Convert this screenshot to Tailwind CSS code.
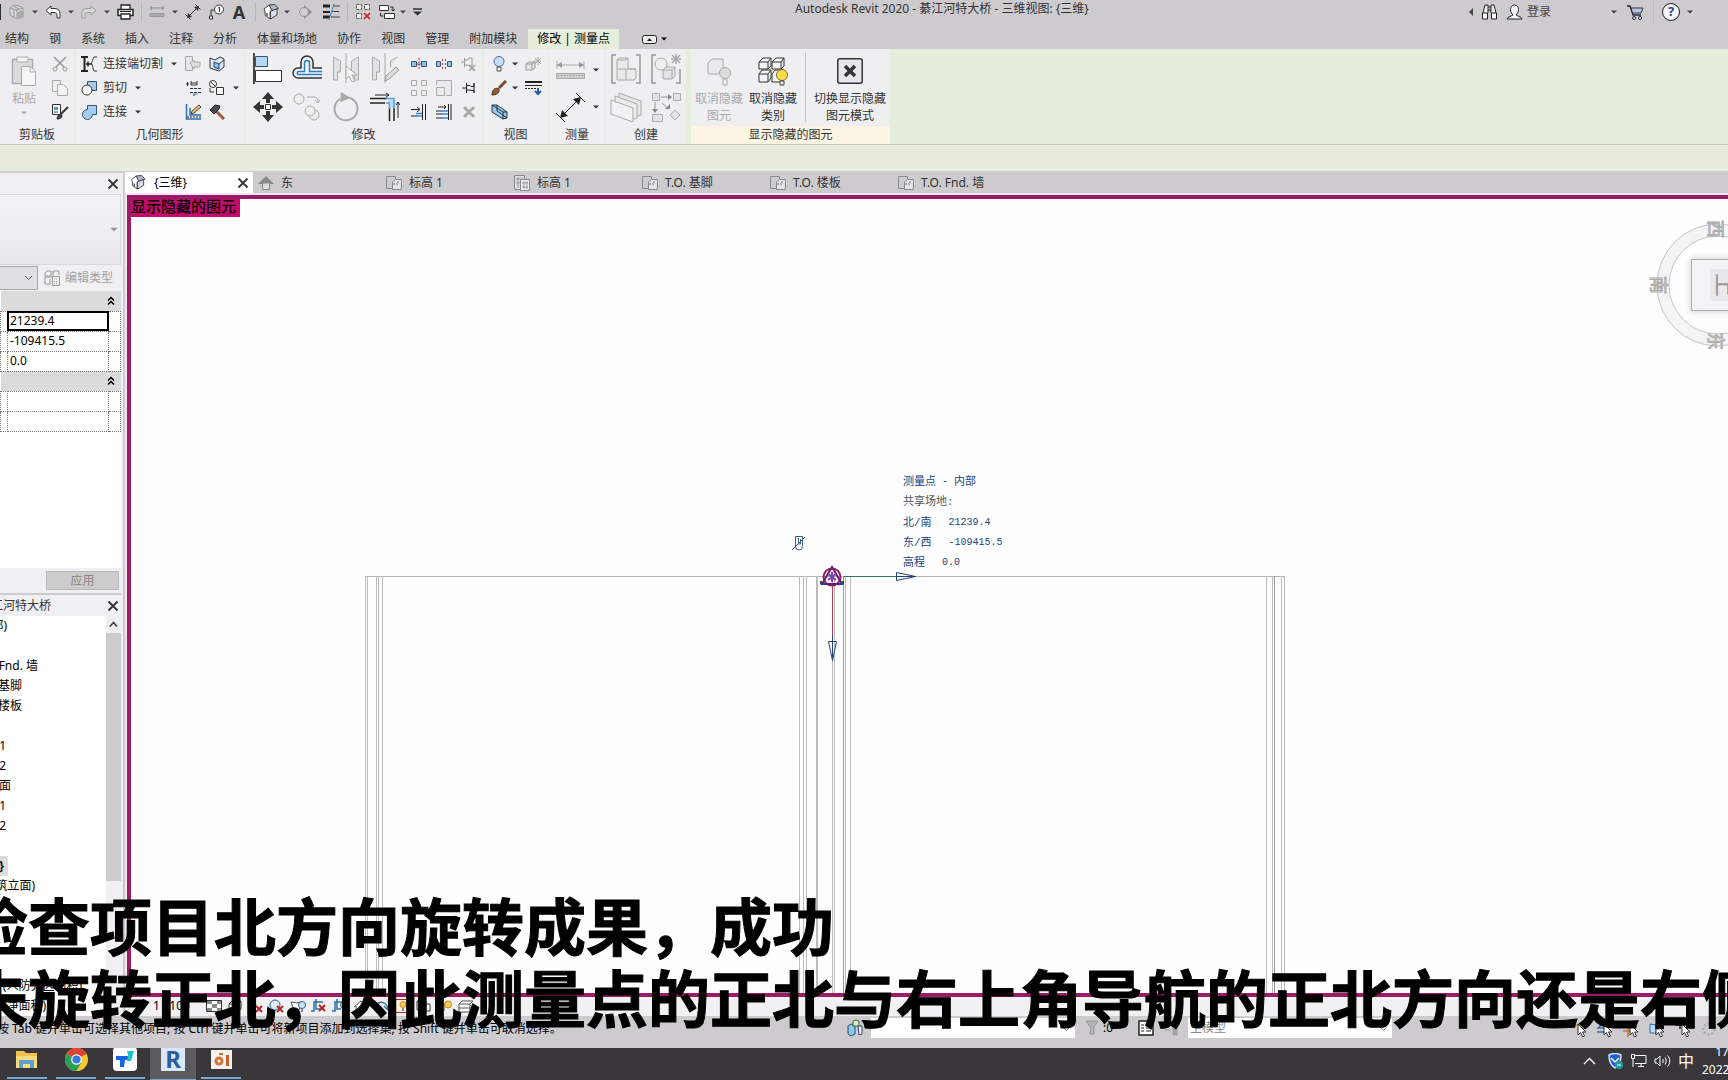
<!DOCTYPE html>
<html lang="zh-CN">
<head>
<meta charset="utf-8">
<title>Autodesk Revit 2020</title>
<script src="https://cdn.jsdelivr.net/npm/@tailwindcss/browser@4"></script>
</head>
<body class="relative flex h-screen flex-col overflow-hidden bg-[#cdcbce] font-['Noto_Sans','Noto_Sans_CJK_SC',sans-serif] text-xs text-[#333] whitespace-nowrap">

<!-- shared icons -->
<svg class="hidden">
  <symbol id="down" viewBox="0 0 6 4"><path d="M0 .5h6L3 3.500z" fill="currentColor"/></symbol>
  <symbol id="close" viewBox="0 0 12 12"><path d="M1.500 1.500l9 9M10.500 1.500l-9 9" stroke="#333" stroke-width="1.800"/></symbol>
  <symbol id="house3d" viewBox="0 0 16 16"><path d="M1 5l5-4 3 4-2 3v7l-5-4V7z" fill="#fff" stroke="#444"/><path d="M6 1l6-.5 3.500 4L9 6.500z" fill="#aab6c9" stroke="#444"/><path d="M7.500 8L9 6.500l5-1.500v6l-6.500 4z" fill="#d6dce6" stroke="#444"/><path d="M4 9v3.500" stroke="#555" stroke-width="1.500"/></symbol>
  <symbol id="plan" viewBox="0 0 16 14"><path d="M.5.500h9v3M.5.500v12h6" fill="none" stroke="#8a8990"/><path d="M6.500 13.500V6l3-2.500h6v10z" fill="#e2e1e6" stroke="#8a8990"/><path d="M7 8h5V4" fill="none" stroke="#77767c" stroke-dasharray="2 1"/></symbol>
  <symbol id="planGrid" viewBox="0 0 16 16"><path d="M.5.500h10v14H.5z" fill="#dddce1" stroke="#8a8990"/><path d="M2 4h7M2 8h4M4 2v11" stroke="#9a99a0"/><path d="M6.500 4.500h9v11h-9z" fill="#eee" stroke="#8a8990"/><path d="M8 8h6M8 12h6M10 6v8M13 6v8" stroke="#9a99a0"/></symbol>
  <symbol id="cursor" viewBox="0 0 16 18"><path d="M7 4v11l2.500-2.500L11.500 17l2-1-2-4H15z" fill="#fff" stroke="#333"/></symbol>
  <symbol id="chev2" viewBox="0 0 8 10"><path d="M1 4.500L4 1.500l3 3M1 8.500l3-3 3 3" fill="none" stroke="#000" stroke-width="1.500"/></symbol>
</svg>

<!-- title bar with quick access -->
<header class="flex h-[26px] shrink-0 items-center">
  <div class="flex w-[795px] shrink-0 items-center pb-0.5 text-[#444]">
    <span class="mr-[4px] h-4 w-px bg-[#333]"></span>
    <button class="flex w-6 justify-center" aria-label="打开"><svg width="16" height="16" viewBox="0 0 16 16"><path d="M1 4l4-3 5 1 4 2v7l-6 4-7-4z" fill="#d8d7da" stroke="#999"/><path d="M1 4l7 2 6-2M8 6v9M4 2l6 3M5 5v8" fill="none" stroke="#999"/><path d="M8 9l4-3 3 3v4l-4 2-3-2z" fill="#aaa"/></svg></button>
    <span class="flex w-3 justify-center"><svg class="h-1 w-1.5"><use href="#down"/></svg></span>
    <button class="flex w-6 justify-center" aria-label="撤销"><svg width="16" height="14" viewBox="0 0 16 14"><path d="M1 5.500L6 1v2.500h4c3 0 5 2 5 5V13h-3V9.500c0-1-1-2-2-2H6V10z" fill="#fff" stroke="#333"/></svg></button>
    <span class="flex w-3 justify-center"><svg class="h-1 w-1.5"><use href="#down"/></svg></span>
    <button class="flex w-6 justify-center" aria-label="重做"><svg width="16" height="14" viewBox="0 0 16 14"><path d="M15 5.500L10 1v2.500H6c-3 0-5 2-5 5V13h3V9.500c0-1 1-2 2-2h4V10z" fill="#d8d7da" stroke="#999"/></svg></button>
    <span class="flex w-3 justify-center"><svg class="h-1 w-1.5"><use href="#down"/></svg></span>
    <button class="flex w-6 justify-center" aria-label="打印"><svg width="17" height="16" viewBox="0 0 17 16"><path d="M4 5V1h9v4" fill="#fff" stroke="#222" stroke-width="1.300"/><path d="M1 5.500h15v6H1z" fill="#fff" stroke="#222" stroke-width="1.500"/><path d="M4 10h9v5H4z" fill="#fff" stroke="#222" stroke-width="1.300"/><path d="M3 7.500h11" stroke="#222"/></svg></button>
    <span class="flex w-2 justify-center"><i class="h-5 w-px bg-[#b9b7ba]"></i></span>
    <button class="flex w-6 justify-center text-[#888]" aria-label="测量"><svg width="16" height="14" viewBox="0 0 16 14"><path d="M1 3h14M3 1L1 3l2 2M13 1l2 2-2 2" fill="none" stroke="#888"/><path d="M1 8.500h14v3H1z" fill="#aaa" stroke="#999"/></svg></button>
    <span class="flex w-3 justify-center"><svg class="h-1 w-1.5"><use href="#down"/></svg></span>
    <button class="flex w-6 justify-center" aria-label="对齐尺寸标注"><svg width="16" height="16" viewBox="0 0 16 16"><path d="M3 13L13 3M.5 10.500l5 5M10.500.5l5 5" stroke="#333"/><path d="M2 14l1-5 4 4zM14 2l-1 5-4-4z" fill="#333"/></svg></button>
    <button class="flex w-6 justify-center" aria-label="标记"><svg width="16" height="16" viewBox="0 0 16 16"><circle cx="10" cy="5.500" r="4.500" fill="#fff" stroke="#333"/><path d="M9 4.500L10.500 3v5M6 6H2v7" fill="none" stroke="#333"/><path d="M.5 12h3v3h-3z" fill="#fff" stroke="#333"/></svg></button>
    <button class="flex w-5 justify-center text-lg leading-5 font-bold text-[#333]">A</button>
    <span class="flex w-3 justify-center"><i class="h-5 w-px bg-[#b9b7ba]"></i></span>
    <button class="flex w-5 justify-center" aria-label="三维视图"><svg width="16" height="16"><use href="#house3d"/></svg></button>
    <span class="flex w-3 justify-center"><svg class="h-1 w-1.5"><use href="#down"/></svg></span>
    <button class="flex w-6 justify-center" aria-label="剖面"><svg width="14" height="14" viewBox="0 0 14 14"><path d="M6 0l8 7-8 7z" fill="#888"/><circle cx="6" cy="7" r="4.500" fill="#d0ced1" stroke="#999"/></svg></button>
    <button class="flex w-7 justify-center" aria-label="细线"><svg width="17" height="16" viewBox="0 0 17 16"><path d="M0 2h7M0 13h7" stroke="#222" stroke-width="3"/><path d="M0 8h7" stroke="#222" stroke-width="2"/><path d="M10 2h7M9 7.500h7M8 13h9" stroke="#444"/><path d="M11 0L6 16" stroke="#3c8bd0"/></svg></button>
    <span class="flex w-1 justify-center"><i class="h-5 w-px bg-[#b9b7ba]"></i></span>
    <button class="flex w-7 justify-center" aria-label="关闭非活动视图"><svg width="17" height="17" viewBox="0 0 17 17"><path d="M1.500.500h5v5h-5zM9.500.500h5v5h-5zM1.500 9.500h5v5h-5z" fill="#eee" stroke="#555" stroke-dasharray="3 1"/><path d="M8 8h8v8H8z" fill="#ddd"/><path d="M9 9l6 6M15 9l-6 6" stroke="#c8393c" stroke-width="2"/></svg></button>
    <button class="flex w-5 justify-center" aria-label="切换窗口"><svg width="16" height="16" viewBox="0 0 16 16"><path d="M.5 1.500h9v5h-9zM5.500 9.500h10v5h-10z" fill="#fff" stroke="#333"/><path d="M11 3h3v4M12.500 5.500L14 7l1.500-1.500M1.500 9v3h3" fill="none" stroke="#222"/></svg></button>
    <span class="flex w-3 justify-center"><svg class="h-1 w-1.5"><use href="#down"/></svg></span>
    <button class="flex w-4 justify-center" aria-label="自定义"><svg width="9" height="8" viewBox="0 0 9 8"><path d="M0 1h9" stroke="#333" stroke-width="1.500"/><path d="M0 3.500h9L4.500 7.500z" fill="#333"/></svg></button>
  </div>
  <h1 class="self-start leading-[18px]">Autodesk Revit 2020 - 綦江河特大桥 - 三维视图: {三维}</h1>
  <div class="mr-[35px] ml-auto flex items-center pb-0.5 text-[#444]">
    <svg width="4" height="8" viewBox="0 0 4 8"><path d="M4 0v8L0 4z" fill="#444"/></svg>
    <button class="ml-2 flex" aria-label="搜索"><svg width="17" height="16" viewBox="0 0 17 16"><path d="M2 9l2-8h3v8M15 9l-2-8h-3v8M7 3h3M7 6h3" fill="#eee" stroke="#222"/><path d="M1.500 9h5v6h-5zM10.500 9h5v6h-5z" fill="#fff" stroke="#222"/></svg></button>
    <button class="ml-2 flex items-center gap-1"><svg width="17" height="16" viewBox="0 0 17 16"><path d="M8.500 1c2.500 0 4 2 4 4.500S11 10 10 11l5 2.500 1 1.500H1l1-1.500L7 11C6 10 4.500 8 4.500 5.500S6 1 8.500 1z" fill="#f6f6fa" stroke="#222"/></svg>登录</button>
    <svg class="ml-[60px] h-1 w-1.5"><use href="#down"/></svg>
    <button class="ml-[10px] flex" aria-label="应用商店"><svg width="17" height="15" viewBox="0 0 17 15"><path d="M0 1h3l3 9h8" fill="none" stroke="#223" stroke-width="1.300"/><path d="M4 3h12l-2 5H5.500z" fill="#b9c4e2" stroke="#334"/><circle cx="7" cy="13" r="1.500" fill="#fff" stroke="#223"/><circle cx="13" cy="13" r="1.500" fill="#fff" stroke="#223"/></svg></button>
    <i class="mx-[9px] h-6 w-px bg-[#bbb9bc]"></i>
    <button class="flex size-4 items-center justify-center rounded-full bg-[#f4f6fc] text-[13px] font-bold text-[#2e3f8f] outline outline-[#222]">?</button>
    <svg class="ml-2 h-1 w-1.5"><use href="#down"/></svg>
  </div>
</header>

<!-- ribbon tabs -->
<nav class="flex h-[23px] shrink-0 items-end gap-5 pl-[5px] leading-5">
  <a href="#">结构</a><a href="#">钢</a><a href="#">系统</a><a href="#">插入</a><a href="#">注释</a><a href="#">分析</a><a href="#">体量和场地</a><a href="#">协作</a><a href="#">视图</a><a href="#">管理</a><a href="#">附加模块</a>
  <a href="#" class="-mx-[9px] bg-[#e6eddb] px-[9px] text-black">修改 | 测量点</a>
  <button class="ml-3 flex h-5 items-center gap-1" aria-label="最小化功能区"><svg width="15" height="9" viewBox="0 0 15 9"><rect x=".5" y=".5" width="14" height="8" rx="2" fill="#eee" stroke="#222"/><path d="M5 6l2.500-3L10 6z" fill="#222"/></svg><svg class="h-1 w-1.5 text-black"><use href="#down"/></svg></button>
</nav>

<!-- ribbon -->
<section class="flex h-24 shrink-0 border-b border-[#c5cbbd] bg-[#e5eddb]">
  <div class="flex bg-[#efeff1]">
    <div class="flex w-[75px] flex-col border-r border-[#e6e8e2]">
      <div class="flex h-[77px] pt-[3px]">
        <button class="ml-[10px] flex w-7 flex-col items-center text-[#aaa]"><svg class="mt-[3px] mb-1" width="26" height="32" viewBox="0 0 26 32"><path d="M1.500 4.500h20v24h-20z" fill="#dcdcde" stroke="#aaa" stroke-width="1.500"/><path d="M6 2h11v5H6z" fill="#f4f4f4" stroke="#aaa"/><path d="M10.500 11.500h9l5 5v14h-14z" fill="#f6f6f6" stroke="#aaa"/><path d="M19 12v5h5" fill="none" stroke="#aaa"/></svg>粘贴<svg class="mt-1 h-1 w-1.5"><use href="#down"/></svg></button>
        <div class="ml-3 flex w-5 flex-col [&>button]:flex [&>button]:h-6 [&>button]:items-center [&>button]:justify-center">
          <button aria-label="剪切"><svg width="16" height="16" viewBox="0 0 16 16"><path d="M2 1l10 10M14 1L4 11" stroke="#999" stroke-width="1.500"/><circle cx="3" cy="13" r="2" fill="none" stroke="#999"/><circle cx="13" cy="13" r="2" fill="none" stroke="#999"/></svg></button>
          <button aria-label="复制"><svg width="16" height="16" viewBox="0 0 16 16"><path d="M.5.500h8v11h-8z" fill="#eee" stroke="#aaa"/><path d="M5.500 4.500h6l4 4v7h-10z" fill="#f3f3f3" stroke="#aaa"/></svg></button>
          <button aria-label="匹配类型属性"><svg width="17" height="16" viewBox="0 0 17 16"><path d="M.5.500h8v10h-8z" fill="#fff" stroke="#333"/><path d="M2 3h4v3H2z" fill="#59a"/><path d="M2 8h4" stroke="#444"/><path d="M16 3L9 10" stroke="#333" stroke-width="2"/><path d="M5 15c1-5 3-5 5-4 0 3-2 4-5 4z" fill="#3b4a5c" stroke="#222"/></svg></button>
        </div>
      </div>
      <span class="text-center leading-[18px]">剪贴板</span>
    </div>

    <div class="flex w-[170px] flex-col border-r border-[#e6e8e2]">
      <div class="flex h-[77px] pt-[3px] pl-[6px] [&>div>button]:flex [&>div>button]:h-6 [&>div>button]:items-center">
        <div class="flex w-[100px] flex-col [&_button]:gap-[5px]">
          <button><svg width="17" height="16" viewBox="0 0 17 16"><path d="M0 1h7M0 15h7M3.500 1v14" stroke="#222" stroke-width="2"/><path d="M16 1h-3c-1 0-1 5-3 6 2 2 2 8 3 8h3" fill="none" stroke="#333"/><path d="M5 8h6M7 5.500v5" stroke="#222" stroke-width="1.500"/></svg>连接端切割<svg class="ml-[3px] h-1 w-1.5"><use href="#down"/></svg></button>
          <button><svg width="17" height="16" viewBox="0 0 17 16"><path d="M6.500 1.500h9v9h-9z" fill="#a4cbee" stroke="#37536f"/><circle cx="6" cy="10" r="5" fill="#fff" stroke="#333"/></svg>剪切<svg class="ml-[3px] h-1 w-1.5"><use href="#down"/></svg></button>
          <button><svg width="17" height="16" viewBox="0 0 17 16"><path d="M6.500 1.500h9v9h-4a5 5 0 1 1-5-5z" fill="#a4cbee" stroke="#37536f"/></svg>连接<svg class="ml-[3px] h-1 w-1.5"><use href="#down"/></svg></button>
        </div>
        <div class="flex w-[24px] flex-col [&>button]:justify-center">
          <button aria-label="连接屋顶"><svg width="16" height="16" viewBox="0 0 16 16"><path d="M.5.500h7v14h-7z" fill="#e6e6e8" stroke="#aaa"/><path d="M5 7l4-3v2h6v5H9v2z" fill="#ddd" stroke="#aaa"/></svg></button>
          <button aria-label="梁连接"><svg width="17" height="16" viewBox="0 0 17 16"><path d="M5 8.500h12M5 12.500h12" stroke="#333" stroke-dasharray="3 1"/><path d="M6 1v4h6V1M6 3h6M1 4h3M2.500 2v4M9 14v2" fill="none" stroke="#333"/><path d="M8 14h5" stroke="#3c8bd0"/></svg></button>
          <button aria-label="拆分面"><svg width="17" height="16" viewBox="0 0 17 16"><path d="M1.500 0v15H16M5 4v7h11" fill="none" stroke="#2c6fae" stroke-width="1.500"/><path d="M2 13h14" stroke="#222" stroke-dasharray="2 1"/><path d="M6 10l1-3 7-6 2 2-7 6z" fill="#f1c26a" stroke="#444"/></svg></button>
        </div>
        <div class="flex w-[36px] flex-col pl-1">
          <button aria-label="填色"><svg width="16" height="16" viewBox="0 0 16 16"><path d="M1 2l5 2 5-3 4 2v8l-5 4-9-3z" fill="#dfe9f5" stroke="#333"/><path d="M5 6l5 2v5l-5-2z" fill="#8ec0ec" stroke="#246"/><path d="M10 8l5-4" stroke="#333"/></svg></button>
          <button aria-label="几何替换"><svg width="16" height="16" viewBox="0 0 16 16"><circle cx="4" cy="4" r="3.500" fill="#fff" stroke="#333"/><path d="M2 2l4 4M1 8v4h4" fill="none" stroke="#333"/><path d="M7.500 7.500h7v7h-7z" fill="#fff" stroke="#333"/></svg><svg class="ml-2 h-1 w-1.5"><use href="#down"/></svg></button>
          <button aria-label="拆除"><svg width="16" height="16" viewBox="0 0 16 16"><path d="M7 7l8 8" stroke="#9a5b3b" stroke-width="3"/><path d="M1 6l5-5 5 1-1 3-5 5z" fill="#4a4a52" stroke="#222"/></svg></button>
        </div>
      </div>
      <span class="text-center leading-[18px]">几何图形</span>
    </div>

    <div class="flex w-[238px] flex-col border-r border-[#e6e8e2]">
      <div class="flex h-[77px]">
        <div class="ml-[3px] grid w-[156px] grid-cols-4 grid-rows-2 place-items-center">
          <button aria-label="对齐"><svg width="29" height="31" viewBox="0 0 29 31"><path d="M1 0v31" stroke="#111" stroke-width="1.500"/><path d="M2.500 3.500h12v10h-12z" fill="#b4d9f6" stroke="#37536f"/><path d="M2.500 17.500h26v11h-26z" fill="#fff" stroke="#333"/></svg></button>
          <button aria-label="偏移"><svg width="30" height="26" viewBox="0 0 30 26"><g fill="none" stroke-width="1.500"><path d="M30 13H21V7a6 6 0 0 0-12 0v6H6a5 5 0 0 0 0 10h24" stroke="#333"/><path d="M30 16.500H17.500V8a2.500 2.500 0 0 0-5 0v8.500H6a2 2 0 0 0 0 3h24" stroke="#2f7fc4"/></g></svg></button>
          <button aria-label="镜像拾取轴"><svg width="28" height="30" viewBox="0 0 28 30"><path d="M1.500 4l7 4v11h-3v8h-4zM26.500 4l-7 4v11h3v8h4z" fill="#e2e2e4" stroke="#aaa"/><path d="M14 0v30" stroke="#aaa"/><path d="M14 13v13l3-3 3 6 3-1-3-6h5z" fill="#f4f4f4" stroke="#aaa"/></svg></button>
          <button aria-label="镜像绘制轴"><svg width="28" height="30" viewBox="0 0 28 30"><path d="M1.500 4l7 4v11h-3v8h-4zM26.500 4l-7 4v6" fill="#e2e2e4" stroke="#aaa"/><path d="M14 0v30" stroke="#aaa"/><path d="M14 28l1-5L25 14l3 3-10 9z" fill="#ddd" stroke="#999"/></svg></button>
          <button aria-label="移动"><svg width="30" height="30" viewBox="0 0 30 30"><path d="M15 0l6 7h-4v4h-4V7H9zM15 30l6-7h-4v-4h-4v4H9zM0 15l7-6v4h4v4H7v4zM30 15l-7-6v4h-4v4h4v4z" fill="#333"/><path d="M12.500 12.500h5v5h-5z" fill="#fff" stroke="#333"/></svg></button>
          <button aria-label="复制图元"><svg width="28" height="28" viewBox="0 0 28 28"><g fill="#eee" stroke="#aaa"><circle cx="6" cy="6" r="5"/><path d="M14 4h7c3 0 4 2 4 6M22 7l3 3 2-3" fill="none"/><circle cx="21" cy="22" r="5"/><circle cx="17" cy="18" r="5"/></g></svg></button>
          <button aria-label="旋转"><svg width="28" height="30" viewBox="0 0 28 30"><path d="M18 6A11.500 11.500 0 1 1 8 7" fill="none" stroke="#aaa" stroke-width="2"/><path d="M9 0l10 6-11 4z" fill="#aaa"/></svg></button>
          <button aria-label="修剪延伸"><svg width="30" height="28" viewBox="0 0 30 28"><path d="M0 5.500h17M0 10h15M19.500 14v14M24 14v14" stroke="#222" stroke-width="1.500"/><path d="M16 5.500h8V16M16 10h3.500v6" fill="none" stroke="#4c9ae0" stroke-width="1.500"/><path d="M18 6.500h5V14h-2.500V9H18z" fill="#b4d9f6"/><path d="M5 2h14M16 0l3 2-3 2M28 25V9M26 12l2-3 2 3" fill="none" stroke="#222"/></svg></button>
        </div>
        <div class="ml-[2px] grid w-[75px] grid-cols-3 grid-rows-3 place-items-center pt-[3px] pb-[2px]">
          <button aria-label="拆分图元"><svg width="16" height="12" viewBox="0 0 16 12"><path d="M.5 3.500h5v5h-5zM10.500 3.500h5v5h-5z" fill="#8ec0ec" stroke="#37536f"/><path d="M8 0v12" stroke="#c33" stroke-dasharray="2 1"/><path d="M5 6h6" stroke="#357"/></svg></button>
          <button aria-label="用间隙拆分"><svg width="16" height="12" viewBox="0 0 16 12"><path d="M.5 3.500h4v5h-4zM11.500 3.500h4v5h-4z" fill="#8ec0ec" stroke="#37536f"/><path d="M6.500 1v10M9.500 1v10" stroke="#c33" stroke-dasharray="2 2"/></svg></button>
          <button aria-label="解锁"><svg width="15" height="14" viewBox="0 0 15 14"><path d="M0 5h3M3.500 1v9M4 3h3l1-2h3v8H8L7 8H4" fill="none" stroke="#999"/><path d="M8 8l6 6M14 8l-6 6" stroke="#999" stroke-width="1.500"/></svg></button>
          <button aria-label="阵列"><svg width="16" height="16" viewBox="0 0 16 16"><path d="M.5.500h5v5h-5zM10.500.500h5v5h-5zM.5 10.500h5v5h-5zM10.500 10.500h5v5h-5z" fill="#eee" stroke="#aaa"/></svg></button>
          <button aria-label="缩放"><svg width="16" height="16" viewBox="0 0 16 16"><path d="M.5 5V.5h15v15H10M.5 7.500h8v8h-8z" fill="#eaeaec" stroke="#aaa"/></svg></button>
          <button aria-label="锁定"><svg width="14" height="12" viewBox="0 0 14 12"><path d="M0 6h4M4.500 1v10M5 3.500h3l1 1h3V1v10V8.500H9l-1-.5H5" fill="none" stroke="#222"/></svg></button>
          <button aria-label="修剪单个"><svg width="16" height="16" viewBox="0 0 16 16"><path d="M0 5.500h8M6 3l3 2.500L6 8M11.500 0v16M14.500 0v16M0 12h6" fill="none" stroke="#222"/><path d="M5 9.500h6M5 12h6" stroke="#3c8bd0" stroke-width="1.500"/></svg></button>
          <button aria-label="修剪多个"><svg width="16" height="16" viewBox="0 0 16 16"><path d="M2 3h8M8 1l2 2-2 2M12.500 0v16M15 0v16M0 7h6M0 10h6M0 14h6" fill="none" stroke="#222"/><path d="M5 7h7M5 10h7M5 14h7" stroke="#3c8bd0" stroke-width="1.500"/></svg></button>
          <button aria-label="删除"><svg width="14" height="14" viewBox="0 0 14 14"><path d="M2 2l10 10M12 2L2 12" stroke="#aaa" stroke-width="3"/></svg></button>
        </div>
      </div>
      <span class="text-center leading-[18px]">修改</span>
    </div>

    <div class="flex w-[66px] flex-col border-r border-[#e6e8e2]">
      <div class="flex h-[77px] pt-[3px] pl-[8px] [&>div>button]:flex [&>div>button]:h-6 [&>div>button]:items-center">
        <div class="flex w-[34px] flex-col [&>button]:gap-[5px]">
          <button aria-label="隐藏"><svg width="16" height="16" viewBox="0 0 16 16"><circle cx="8" cy="5.500" r="5" fill="#c4e0fa" stroke="#4a6a94"/><path d="M6 11h4v4H6z" fill="#eee" stroke="#555"/></svg><svg class="h-1 w-1.5"><use href="#down"/></svg></button>
          <button aria-label="替换"><svg width="16" height="16" viewBox="0 0 16 16"><path d="M15 1L8 8" stroke="#7c4a2a" stroke-width="3"/><path d="M1 15c0-6 4-8 7-6 1 4-3 6-7 6z" fill="#9a5a2b" stroke="#432"/></svg><svg class="h-1 w-1.5"><use href="#down"/></svg></button>
          <button aria-label="选择框"><svg width="17" height="16" viewBox="0 0 17 16"><path d="M1 1l5-0 10 7v6l-4 1L1 8z" fill="#9cc8ee" stroke="#234"/><path d="M1 1l11 7v7M12 8l4 0M6 1v6l10 7" fill="none" stroke="#234"/></svg></button>
        </div>
        <div class="flex w-5 flex-col">
          <button aria-label="置换"><svg width="17" height="16" viewBox="0 0 17 16"><path d="M1 8l3-2h6v6l-3 2H1z" fill="#e4e4e6" stroke="#999"/><path d="M1 8h6v6M7 8l3-2" fill="none" stroke="#999"/><path d="M13 1v8M9 5h7M10 2l6 6M16 2l-6 6" stroke="#aaa"/></svg></button>
          <button aria-label="线处理"><svg width="17" height="16" viewBox="0 0 17 16"><path d="M0 2h17" stroke="#222" stroke-width="2"/><path d="M0 5.500h17" stroke="#222"/><path d="M0 8.500h12" stroke="#222" stroke-dasharray="2 1"/><path d="M13 8v6M10 11l3 3 3-3" fill="none" stroke="#1f62b0" stroke-width="2"/></svg></button>
        </div>
      </div>
      <span class="text-center leading-[18px]">视图</span>
    </div>

    <div class="flex w-[57px] flex-col border-r border-[#e6e8e2]">
      <div class="flex h-[77px] flex-col justify-around pt-[2px] pl-[7px] [&>button]:flex [&>button]:h-8 [&>button]:items-center [&>button]:gap-2">
        <button aria-label="测量两点"><svg class="shrink-0" width="29" height="18" viewBox="0 0 29 18"><path d="M1 4h27M1 0v8M28 0v8" stroke="#aaa"/><path d="M1 4l5-3v6zM28 4l-5-3v6z" fill="#999"/><path d="M.5 12.500h28v5H.5z" fill="#ccc" stroke="#aaa"/><path d="M2 14.500h26" stroke="#999" stroke-dasharray="1 2"/></svg><svg class="h-1 w-1.5 shrink-0"><use href="#down"/></svg></button>
        <button aria-label="尺寸"><svg class="shrink-0" width="29" height="29" viewBox="0 0 29 29"><path d="M5 24L24 5M0 20l9 9M20 0l9 9" stroke="#222"/><path d="M4 25l2-8 6 6zM25 4l-2 8-6-6z" fill="#222"/></svg><svg class="h-1 w-1.5 shrink-0"><use href="#down"/></svg></button>
      </div>
      <span class="text-center leading-[18px]">测量</span>
    </div>

    <div class="flex w-[80px] flex-col">
      <div class="grid h-[77px] grid-cols-2 grid-rows-2 place-items-center pt-px">
        <button aria-label="创建组"><svg width="30" height="30" viewBox="0 0 30 30"><path d="M5 1H1v28h4M25 1h4v28h-4" fill="none" stroke="#999" stroke-width="1.500"/><path d="M6 6l3-2h8v11h8v9l-2 2H6z" fill="#eaeaec" stroke="#aaa"/><path d="M6 15h19M15 15v11M6 6h9l2-2" fill="none" stroke="#aaa"/></svg></button>
        <button aria-label="创建类似"><svg width="30" height="30" viewBox="0 0 30 30"><path d="M5 1H1v28h4M25 29h4V15" fill="none" stroke="#999" stroke-width="1.500"/><circle cx="10" cy="10" r="6" fill="#eee" stroke="#aaa"/><path d="M12 16l3-3h9v9l-3 3h-9zM12 16h9v9M21 16l3-3" fill="#e4e4e6" stroke="#aaa"/><path d="M25 0v10M20 5h10M21 1l8 8M29 1l-8 8" stroke="#aaa" stroke-width="1.500"/></svg></button>
        <button aria-label="创建零件"><svg width="32" height="30" viewBox="0 0 32 30"><path d="M9 1l22 8v14l-2 1L9 16z" fill="#e6e6e8" stroke="#aaa"/><path d="M5 4l22 8v14l-2 1L5 19z" fill="#ececee" stroke="#aaa"/><path d="M1 8l22 8v14L1 22z" fill="#f2f2f4" stroke="#aaa"/></svg></button>
        <button aria-label="创建部件"><svg width="30" height="30" viewBox="0 0 30 30"><path d="M1.500 1.500h7v7h-7zM22.500 1.500h7v7h-7zM1.500 22.500h10v7h-10zM24 18l5 5-5 5-5-5z" fill="#e4e4e6" stroke="#aaa"/><path d="M10 5h9M4 10v10M11 11l7 6" stroke="#999"/><path d="M17 2l4 3-4 3zM1 17l3 4 3-4zM14 17h5v-5z" fill="#888"/></svg></button>
      </div>
      <span class="text-center leading-[18px]">创建</span>
    </div>
  </div>

  <div class="ml-[5px] flex w-[199px] flex-col bg-[#efeff1]">
    <div class="flex h-[77px]">
      <button class="flex w-14 flex-col items-center pt-[5px] leading-[17px] text-[#aaa]"><svg class="mt-0.5 mb-1 shrink-0" width="26" height="30" viewBox="0 0 26 30"><path d="M2 7l4-4h11v9l-5 6H2z" fill="#eaeaec" stroke="#aaa"/><circle cx="19" cy="17" r="5.500" fill="#ddd" stroke="#aaa"/><path d="M17 23h4v6h-4z" fill="#eee" stroke="#aaa"/></svg><span>取消隐藏<br>图元</span></button>
      <button class="flex w-[52px] flex-col items-center pt-[5px] leading-[17px]"><svg class="mt-0.5 mb-1 shrink-0" width="30" height="30" viewBox="0 0 30 30"><g fill="#f4f4f6" stroke="#333"><path d="M1 6l4-4h8v8l-3 3H1zM14 6l4-4h8v8l-3 3h-9zM1 18l3-4h9v8l-3 4H1zM14 18l3-4h9v8l-3 4h-9z"/><path d="M1 6h9l3-4M10 6v7M14 6h9l3-4M23 6v7M1 18h9l3-4M10 18v8" fill="none"/></g><circle cx="24" cy="19" r="5.500" fill="#f8dc4b" stroke="#86741c"/><path d="M22 25h4v4h-4z" fill="#eee" stroke="#444"/></svg><span>取消隐藏<br>类别</span></button>
      <i class="mt-[3px] ml-[6px] h-[70px] w-px bg-[#c6c6c8]"></i>
      <button class="flex w-[84px] flex-1 flex-col items-center pt-[5px] leading-[17px] pl-1"><svg class="mt-1 mb-[6px] shrink-0" width="26" height="26" viewBox="0 0 26 26"><rect x=".8" y=".8" width="24.400" height="24.400" rx="2" fill="#e4e7ee" stroke="#333" stroke-width="1.500"/><path d="M8 8l10 10M18 8L8 18" stroke="#333" stroke-width="3.500"/></svg><span>切换显示隐藏<br>图元模式</span></button>
    </div>
    <span class="h-[18px] bg-[#fdf5e4] text-center leading-[18px]">显示隐藏的图元</span>
  </div>
</section>
<div class="h-[26px] shrink-0 bg-[#e6eddb]"></div>

<main class="flex min-h-0 flex-1 bg-[#cdcbce]">
  <!-- properties and project browser -->
  <aside class="mt-[2px] mr-[2px] flex w-[123px] shrink-0 flex-col overflow-hidden border-r-2 border-[#f0eff1] bg-white text-black">
    <div class="flex h-[21px] shrink-0 items-center justify-end bg-[#f0eff1] pr-[2px]"><button aria-label="关闭属性"><svg width="12" height="12"><use href="#close"/></svg></button></div>
    <div class="flex h-[71px] shrink-0 items-center justify-end border border-l-0 border-[#d9d8da] bg-linear-to-b from-[#f3f2f4] to-[#e9e8ea] pr-0.5"><svg class="text-[#999]" width="8" height="5"><use href="#down"/></svg></div>
    <div class="flex h-[26px] shrink-0 items-center bg-[#f0eff1] pb-px">
      <div class="relative h-6 w-[38px] border border-l-0 border-[#a9a8aa] bg-[#e0dfe1]"><select class="h-full w-full appearance-none" aria-label="类型"></select><svg class="pointer-events-none absolute top-2 right-1" width="9" height="6" viewBox="0 0 9 6"><path d="M1 1l3.500 3.500L8 1" fill="none" stroke="#555"/></svg></div>
      <button class="ml-[6px] flex items-center gap-[5px] text-[#a3a3a3]"><svg width="16" height="16" viewBox="0 0 16 16"><path d="M1 3l2-2h4v5H1zM9 3l1-2h5v4M9 1v6H1v7h5V9" fill="none" stroke="#999"/><path d="M8.500 6.500h7v9h-7z" fill="#f4f4f4" stroke="#999"/><path d="M10 9h4M10 11.500h4M10 13.500h4" stroke="#999" stroke-dasharray="1 1"/></svg>编辑类型</button>
    </div>
    <table class="w-full shrink-0 table-fixed border-collapse">
      <colgroup><col class="w-[7px]"><col class="w-[101px]"><col></colgroup>
      <tbody class="[&_td]:h-5 [&_td]:border [&_td]:border-dotted [&_td]:border-[#777] [&_td]:p-0 [&_td]:leading-[18px] [&_th]:h-5 [&_th]:bg-[#dcdbdc] [&_th]:p-0">
        <tr><th colspan="3"><button class="float-right mr-1.5 flex" aria-label="折叠限制条件"><svg width="8" height="10"><use href="#chev2"/></svg></button></th></tr>
        <tr><td></td><td><input class="block h-[18px] w-full px-0.5 outline-2 -outline-offset-1 outline-black" aria-label="北/南" value="21239.4"></td><td></td></tr>
        <tr><td></td><td class="indent-0.5">-109415.5</td><td></td></tr>
        <tr><td></td><td class="indent-0.5">0.0</td><td></td></tr>
        <tr><th colspan="3"><button class="float-right mr-1.5 flex" aria-label="折叠标识数据"><svg width="8" height="10"><use href="#chev2"/></svg></button></th></tr>
        <tr><td></td><td></td><td></td></tr>
        <tr><td></td><td></td><td></td></tr>
      </tbody>
    </table>
    <div class="mt-auto flex h-[26px] shrink-0 items-center justify-end border-b border-[#cdcbce] bg-[#f0eff1] pr-0.5"><button class="h-[19px] w-[73px] border border-[#b9b8ba] bg-[#cdcccd] leading-none text-[#888]">应用</button></div>
    <div class="flex h-[22px] shrink-0 items-center justify-between border-t border-[#cdcbce] bg-[#f0eff1] pr-[2px] text-[#333]"><h2 class="flex w-[51px] justify-end">江河特大桥</h2><button aria-label="关闭项目浏览器"><svg width="12" height="12"><use href="#close"/></svg></button></div>
    <div class="flex h-[400px] shrink-0">
      <ul class="w-[106px] overflow-hidden leading-5 [&>li]:flex [&>li]:h-5 [&>li]:justify-end">
        <li class="w-[7px]">部)</li><li></li><li class="w-[38px]">Fnd. 墙</li><li class="w-[22px]">基脚</li><li class="w-[22px]">楼板</li><li></li><li class="w-[6px]">1</li><li class="w-[6px]">2</li><li class="w-[11px]">面</li><li class="w-[6px]">1</li><li class="w-[6px]">2</li><li></li><li class="w-2 bg-[#dedddf] pr-1 font-bold">}</li><li class="w-[35px]">筑立面)</li><li></li><li></li><li></li><li></li><li class="w-[82px]">(人防分区面积)</li><li class="w-[46px]">(净面积)</li>
      </ul>
      <div class="flex w-[15px] flex-col bg-[#f0eff1]">
        <span class="flex h-[17px] items-center justify-center"><svg width="9" height="7" viewBox="0 0 9 7"><path d="M1 5.500l3.500-4 3.500 4" fill="none" stroke="#444" stroke-width="1.800"/></svg></span>
        <i class="h-[248px] bg-[#cdcccd]"></i>
      </div>
    </div>
  </aside>

  <!-- view area -->
  <section class="flex min-w-0 flex-1 flex-col">
    <div class="flex h-[22px] shrink-0 items-end [&>a]:flex [&>a]:h-[21px] [&>a]:w-32 [&>a]:items-center [&>a]:gap-[7px] [&>a]:pl-[5px]">
      <a href="#" class="bg-white text-black"><svg class="mr-px" width="16" height="15"><use href="#house3d"/></svg>{三维}<svg class="mr-1 ml-auto" width="12" height="12"><use href="#close"/></svg></a>
      <a href="#"><svg width="16" height="14" viewBox="0 0 16 14"><path d="M8 0l8 8H0z" fill="#888"/><path d="M4.500 7h7v6.500h-7z" fill="#ddd" stroke="#888"/></svg>东</a>
      <a href="#"><svg width="16" height="14"><use href="#plan"/></svg>标高 1</a>
      <a href="#"><svg width="16" height="16"><use href="#planGrid"/></svg>标高 1</a>
      <a href="#"><svg width="16" height="14"><use href="#plan"/></svg>T.O. 基脚</a>
      <a href="#"><svg width="16" height="14"><use href="#plan"/></svg>T.O. 楼板</a>
      <a href="#"><svg width="16" height="14"><use href="#plan"/></svg>T.O. Fnd. 墙</a>
    </div>
    <div class="flex min-h-0 flex-1 border-t-2 border-l-2 border-[#f3e4f1]">
      <div class="relative min-w-0 flex-1 overflow-hidden border-4 border-r-0 border-[#9b1c65] bg-[#fefefe]">
        <span class="absolute -top-1 -left-1 flex h-[22px] w-[113px] items-center bg-[#c60a6c] pl-1 text-[15px] font-medium text-black">显示隐藏的图元</span>
        <svg class="h-full w-full" fill="none">
          <g transform="translate(-1 -1)">
            <path d="M235 378.500H1154" stroke="#b5b5b5"/>
            <path d="M235.500 378v620M237.500 378v620M246.500 378v620M248.500 378v620M252.500 378v620M669.500 378v620M673.500 378v620M676.500 378v620M686.500 378v620M687.500 378v620M702.500 378v620M704.500 378v620M713.500 378v620M715.500 378v620M720.500 378v620M1136.500 378v620M1142.500 378v620M1144.500 378v620M1151.500 378v620M1154.500 378v620" stroke="#bcbcbe"/>
            <path d="M1144.500 378v620M713.500 378v620" stroke="#999"/>
            <path d="M702.500 388v58" stroke="#c0405e"/><path d="M714 378.500h52" stroke="#3c7058"/>
            <path d="M766.500 374.500v8l19-4zM766 378.500h20M698.500 443.500h8l-4 19zM702.500 437v24" stroke="#25437c"/>
            <circle cx="702" cy="379" r="8.500" stroke="#9b1c65" stroke-width="2"/>
            <path d="M702 369l-10 17h20z" stroke="#6b1c70" stroke-width="2"/>
            <path d="M691 386v-3M713 386v-3M691 386h4M709 386h4" stroke="#25437c" stroke-width="2"/>
            <path d="M698 376l8 6M706 376l-8 6M702 374v10" stroke="#7a3fb0" stroke-width="2"/>
            <path d="M665.500 338.500v10a3.500 3.500 0 0 0 7 0v-10zM668.500 340v6h2v-5M662 352l13-13" stroke="#3a5f8a"/>
          </g>
          <circle cx="1587" cy="86" r="55" stroke="#f4f4f5" stroke-width="12"/>
          <circle cx="1587" cy="86" r="61" stroke="#c4c4c6"/><circle cx="1587" cy="86" r="49" stroke="#c4c4c6"/>
        </svg>
        <div class="absolute top-[273px] left-[772px] flex flex-col font-['Liberation_Mono','Noto_Sans_CJK_SC',monospace] text-[10px] leading-5 text-[#24457f] [&_b]:text-[11px] [&_b]:font-normal">
          <p class="flex gap-1.5"><b>测量点</b><span>-</span><b>内部</b></p>
          <p class="text-[#555]"><b>共享场地:</b></p>
          <p class="flex gap-[17px]"><b>北/南</b><span>21239.4</span></p>
          <p class="flex gap-[17px]"><b>东/西</b><span>-109415.5</span></p>
          <p class="flex gap-[17px]"><b>高程</b><span>0.0</span></p>
        </div>
        <!-- navigation cube -->
        <div class="absolute top-[20px] left-[1576px] rotate-90 text-lg leading-5 text-[#f4f4f4] [-webkit-text-stroke:1px_#aaa]">西</div>
        <div class="absolute top-[76px] left-[1519px] rotate-90 text-lg leading-5 text-[#f4f4f4] [-webkit-text-stroke:1px_#aaa]">南</div>
        <div class="absolute top-[132px] left-[1576px] rotate-90 text-lg leading-5 text-[#f4f4f4] [-webkit-text-stroke:1px_#aaa]">东</div>
        <div class="absolute top-[60px] left-[1560px] flex h-[52px] w-[54px] items-center justify-center border border-[#aaa] bg-[#f3f2f4] pl-4 shadow-[0_0_8px_#ccc]"><span class="flex size-8 rotate-90 items-center justify-center bg-[#e9e9ec] text-2xl text-[#999]">上</span></div>
      </div>
    </div>
    <div class="flex h-[19px] shrink-0 items-center bg-[#f1f0f2] pb-0.5 pl-7 text-black">
      <span class="w-[53px]">1 : 100</span>
      <div class="flex items-center gap-[5px]">
        <svg width="16" height="12" viewBox="0 0 16 12"><path d="M.5.500h15v11H.5z" fill="#fff" stroke="#333"/><path d="M1 1h5v3H1zM11 1h4v3h-4zM6 4h5v4H6zM1 8h5v3H1zM11 8h4v3h-4z" fill="#888"/></svg>
        <svg width="16" height="14" viewBox="0 0 16 14"><path d="M2 5l3-3h9v8l-3 3H2zM2 5h9v8M11 5l3-3" fill="#fff" stroke="#333"/></svg>
        <svg width="16" height="14" viewBox="0 0 16 14"><path d="M2 6h7M5 2v8" stroke="#d8892b"/><path d="M8 7l6 6M14 7l-6 6" stroke="#b82a2a" stroke-width="2"/></svg>
        <svg width="16" height="14" viewBox="0 0 16 14"><circle cx="6" cy="6" r="5" fill="#dfedfa" stroke="#37618f"/><path d="M8 7l6 6M14 7l-6 6" stroke="#b82a2a" stroke-width="2"/></svg>
        <svg width="16" height="14" viewBox="0 0 16 14"><path d="M1 3l3 8h5l2-8-4 1z" fill="#fff" stroke="#555"/><circle cx="12" cy="6" r="3.500" fill="#d0e6fb" stroke="#37618f"/><path d="M11 10h2v3h-2z" fill="#888"/></svg>
        <svg width="16" height="14" viewBox="0 0 16 14"><path d="M0 12h3V3h9M5 0v10h8" fill="none" stroke="#2c6fae" stroke-width="1.500"/><path d="M8 6l6 6M14 6l-6 6" stroke="#b82a2a" stroke-width="2"/></svg>
        <svg width="16" height="14" viewBox="0 0 16 14"><path d="M0 12h3V3h7M5 0v10h4" fill="none" stroke="#2c6fae" stroke-width="1.500"/><circle cx="12" cy="6" r="3.500" fill="#d0e6fb" stroke="#37618f"/></svg>
        <svg width="16" height="14" viewBox="0 0 16 14"><path d="M1 8l7-6 7 6M3 7v6h9V7" fill="#fff" stroke="#555"/></svg>
        <svg width="16" height="14" viewBox="0 0 16 14"><path d="M1 10c0-9 12-9 13 0M10 7l4 4" fill="none" stroke="#3a6ea5" stroke-width="1.500"/></svg>
        <svg width="16" height="14" viewBox="0 0 16 14"><path d="M.5.500h15v13H.5z" fill="#fff3dc" stroke="#b3262b"/><circle cx="8" cy="5.500" r="3" fill="#f8c954" stroke="#c98a1b"/><path d="M7 9h2v3H7z" fill="#888"/></svg>
        <svg width="16" height="14" viewBox="0 0 16 14"><path d="M1 2h9v9H1zM10 5h4v7h-7" fill="#fff" stroke="#333"/></svg>
        <svg width="16" height="14" viewBox="0 0 16 14"><path d="M1 4h6v8H1z" fill="#fff" stroke="#555"/><circle cx="11" cy="5.500" r="3.500" fill="#f8c954" stroke="#c98a1b"/></svg>
        <svg width="16" height="14" viewBox="0 0 16 14"><path d="M1 5l3-3h11l-3 3v8H1zM1 5h11M1 9h11" fill="#fff" stroke="#555"/></svg>
      </div>
    </div>
  </section>
</main>

<!-- status bar -->
<footer class="flex h-8 shrink-0 items-center bg-[#cdcbce] text-black">
  <p class="-ml-[3px] w-[850px] shrink-0 pb-1.5">按 Tab 键并单击可选择其他项目; 按 Ctrl 键并单击可将新项目添加到选择集; 按 Shift 键并单击可取消选择。</p>
  <div class="flex items-center pb-2">
    <svg width="16" height="18" viewBox="0 0 16 18"><path d="M1 7l3-2 4 2v8l-4 2-3-2z" fill="#8cc8ea" stroke="#23506f"/><path d="M6 2l3-1 3 1v5H6z" fill="#d5efcf" stroke="#356a2b"/><path d="M11 7h4v8l-3 1z" fill="#eef" stroke="#346"/></svg>
    <div class="relative ml-2"><select class="block h-5 w-[204px] appearance-none bg-white" aria-label="工作集"></select><svg class="pointer-events-none absolute top-2 right-1" width="9" height="6" viewBox="0 0 9 6"><path d="M1 1l3.500 3.500L8 1" fill="none" stroke="#888"/></svg></div>
    <svg class="ml-[10px]" width="14" height="16" viewBox="0 0 14 16"><path d="M1 1h12l-4 6v7H5l1-6z" fill="#b5b4b7" stroke="#999"/></svg>
    <span class="ml-1 w-[35px]">:0</span>
    <svg width="16" height="16" viewBox="0 0 16 16"><path d="M1 1h14v14H1z" fill="#fff" stroke="#222" stroke-width="1.500"/><path d="M3 5h3M3 8h3M3 11h3M8 5h5M8 8h5M8 11h5" stroke="#222"/></svg>
    <svg class="mx-[10px]" width="14" height="16" viewBox="0 0 14 16"><path d="M1 10h6M9 1h4v14H9z" fill="#aaa" stroke="#999"/></svg>
    <div class="relative"><select class="block h-5 w-[204px] appearance-none bg-white pl-0.5 text-[#888]" aria-label="设计选项"><option>主模型</option></select><svg class="pointer-events-none absolute top-2 right-1" width="9" height="6" viewBox="0 0 9 6"><path d="M1 1l3.500 3.500L8 1" fill="none" stroke="#888"/></svg></div>
  </div>
  <div class="mr-[11px] ml-auto flex items-center gap-[10px] pb-1.5">
    <svg width="16" height="18"><path d="M1 6a4 3 0 0 1 7 0M8 6a4 3 0 0 1 7 0" fill="none" stroke="#d6a021" stroke-width="2"/><use href="#cursor"/></svg>
    <svg width="16" height="18"><path d="M0 12h10M1 8h8L5 4z" fill="none" stroke="#2d6ea8" stroke-width="1.500"/><use href="#cursor"/></svg>
    <svg width="16" height="18"><path d="M0 11h9M5 2v15M3 3h5v5" fill="none" stroke="#d0762a" stroke-width="1.500"/><use href="#cursor"/></svg>
    <svg width="16" height="18"><path d="M1 4l6 1v8H1z" fill="#bcdcf8" stroke="#2d6ea8"/><path d="M9 2l5 5M14 2L9 7" stroke="#c33" stroke-width="2"/><use href="#cursor"/></svg>
    <svg width="16" height="18"><path d="M0 5h10M5 0v9" stroke="#222" stroke-width="1.500"/><use href="#cursor"/></svg>
    <svg width="16" height="16"><circle cx="8" cy="8" r="5.500" fill="none" stroke="#aaa" stroke-width="2.500" stroke-dasharray="2 2"/></svg>
  </div>
</footer>

<!-- Windows taskbar -->
<footer class="flex h-8 shrink-0 items-center overflow-hidden bg-[#39373a] pl-[7px] text-white">
  <div class="flex gap-[9px] [&>button]:flex [&>button]:h-8 [&>button]:w-10 [&>button]:justify-center [&>button]:border-b-2 [&>button]:border-[#76a9d4]">
    <button aria-label="文件资源管理器"><svg class="mt-[3px]" width="22" height="19" viewBox="0 0 22 19"><path d="M0 1h8l2 2h11v15H0z" fill="#f2c14a"/><path d="M0 6h21v12H0z" fill="#fbdc7d"/><path d="M3 10h15v8h-4v-4H7v4H3z" fill="#5aa2cf"/></svg></button>
    <button aria-label="Chrome"><svg class="mt-px" width="23" height="23" viewBox="0 0 24 24"><circle cx="12" cy="12" r="12" fill="#f8c82f"/><path d="M12 12L1.600 6A12 12 0 0 1 22.400 6z" fill="#dd4437"/><path d="M12 12L1.600 6A12 12 0 0 0 12 24l5-9z" fill="#2c9f55"/><circle cx="12" cy="12" r="5.500" fill="#fff"/><circle cx="12" cy="12" r="4.300" fill="#3c79e2"/></svg></button>
    <button aria-label="会议"><svg width="24" height="24" viewBox="0 0 24 24"><rect width="24" height="24" rx="4" fill="#fff"/><path d="M3 9h12v4h-3l-1 7H7v-7H3z" fill="#1763e6"/><path d="M14 4h7l-3 10h-4l1-6z" fill="#1fc1c8"/></svg></button>
    <button class="-mx-1 box-content bg-[#5b5a5d] px-[3px]" aria-label="Revit"><span class="flex size-6 items-center justify-center bg-[#dbe7f7] text-2xl leading-6 font-bold text-[#2b5f9e]">R</span></button>
    <button aria-label="录屏"><svg class="mt-[3px]" width="21" height="19" viewBox="0 0 21 19"><path d="M0 0h21v19H0z" fill="#f7f1ec"/><circle cx="8" cy="11" r="4.500" fill="#d4743d"/><circle cx="8" cy="11" r="1.500" fill="#fff"/><path d="M15 5h3v11h-3z" fill="#c45f2e"/><path d="M8 4h4" stroke="#d4743d" stroke-width="2"/></svg></button>
  </div>
  <div class="-mr-8 ml-auto flex items-center gap-[7px] pb-[7px]">
    <svg width="13" height="8" viewBox="0 0 13 8"><path d="M1 7l5.500-5.500L12 7" fill="none" stroke="#fff" stroke-width="1.300"/></svg>
    <svg class="ml-1" width="16" height="16" viewBox="0 0 16 16"><path d="M2 2c4-2 8-2 12 0 0 6-1 10-6 13C3 12 2 8 2 2z" fill="#1b5fd0" stroke="#cfe3ff" stroke-width="1.500"/><path d="M4 5l4 4 4-4" fill="none" stroke="#fff" stroke-width="1.500"/><circle cx="12" cy="12" r="4" fill="#1d9c9a"/><path d="M10 12h4" stroke="#fff"/></svg>
    <svg width="17" height="15" viewBox="0 0 17 15"><path d="M5 2.500h11v8H5M1.500 1.500h3v4h-3zM3 6v8M8 13.500h6M11 11v2" fill="none" stroke="#fff"/></svg>
    <svg width="17" height="14" viewBox="0 0 17 14"><path d="M1 5v4h2l3 3V2L3 5zM9 5v4M11 3.500c1.500 2 1.500 5 0 7M13.500 1.500c3 3 3 8 0 11" fill="none" stroke="#fff"/></svg>
    <span class="text-base leading-5">中</span>
    <time class="w-[59px] text-center leading-[18px]">17:05<br>2022/3/18</time>
  </div>
</footer>

<!-- video subtitles -->
<div class="pointer-events-none absolute bottom-12 left-0 w-full overflow-hidden font-['Noto_Sans_CJK_SC',sans-serif] text-[62px] leading-[72px] font-bold text-black [-webkit-text-stroke:1px_#000]">
  <p class="-ml-[34px]">检查项目北方向旋转成果，成功</p>
  <p class="-ml-[34px]">未旋转正北，因此测量点的正北与右上角导航的正北方向还是右侧</p>
</div>
</body>
</html>
